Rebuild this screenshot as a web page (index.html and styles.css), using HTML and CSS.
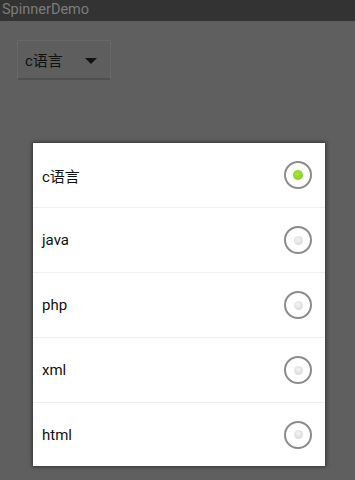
FILE: index.html
```html
<!DOCTYPE html>
<html>
<head>
  <title>SpinnerDemo</title>
  <link rel="stylesheet" href="styles.css">
</head>
<body>
  <div class="titlebar">SpinnerDemo</div>
  <div class="content">
    <div class="spinner">
      <span class="spinner-text">c语言</span>
      <span class="arrow"></span>
    </div>
  </div>

  <div class="dialog">
    <div class="option">
      <span>c语言</span>
      <span class="radio checked"><span class="dot"></span></span>
    </div>
    <div class="option">
      <span>java</span>
      <span class="radio"><span class="dot"></span></span>
    </div>
    <div class="option">
      <span>php</span>
      <span class="radio"><span class="dot"></span></span>
    </div>
    <div class="option">
      <span>xml</span>
      <span class="radio"><span class="dot"></span></span>
    </div>
    <div class="option last">
      <span>html</span>
      <span class="radio"><span class="dot"></span></span>
    </div>
  </div>
</body>
</html>
```

FILE: styles.css
```css
html, body {
  margin: 0;
  height: 100%;
}

body {
  font-family: Roboto, "Noto Sans CJK SC", sans-serif;
  background-color: #5f5f5f;
  position: relative;
  overflow: hidden;
}

.titlebar {
  height: 21px;
  line-height: 20px;
  background-color: #333;
  color: #7c7c7c;
  font-size: 14.5px;
  padding-left: 2px;
}

.content {
  padding: 19px 0 0 17px;
}

.spinner {
  width: 94px;
  height: 40px;
  box-sizing: border-box;
  border: 1px solid #686868;
  border-bottom: 2px solid #505050;
  border-radius: 2px;
  background-color: #5e5e5e;
  display: flex;
  align-items: center;
  padding-left: 7px;
}

.spinner-text {
  font-size: 15px;
  color: #111;
}

.arrow {
  margin-left: 22px;
  margin-top: 2px;
  width: 0;
  height: 0;
  border-left: 6px solid transparent;
  border-right: 6px solid transparent;
  border-top: 6px solid #111;
}

/* dialog sits over the page */
.dialog {
  position: absolute;
  left: 33px;
  top: 143px;
  width: 292px;
  background-color: #fff;
  box-shadow: 0 0 4px 1px rgba(0, 0, 0, 0.45);
}

.option {
  height: 64px;
  border-bottom: 1px solid #efefef;
  display: flex;
  align-items: center;
  justify-content: space-between;
  padding: 0 13px 0 9px;
  font-size: 15px;
  color: #111;
}

.option.last {
  height: 63px;
  border-bottom: none;
}

.radio {
  width: 24px;
  height: 24px;
  border: 2px solid #8c8c8c;
  border-radius: 50%;
  display: flex;
  align-items: center;
  justify-content: center;
}

.dot {
  width: 9px;
  height: 9px;
  border-radius: 50%;
  background: radial-gradient(circle at 45% 40%, #f4f4f4, #d0d0d0);
}

.radio.checked .dot {
  width: 10px;
  height: 10px;
  background: radial-gradient(circle at 45% 40%, #a8e83a, #7cc512);
}
```
